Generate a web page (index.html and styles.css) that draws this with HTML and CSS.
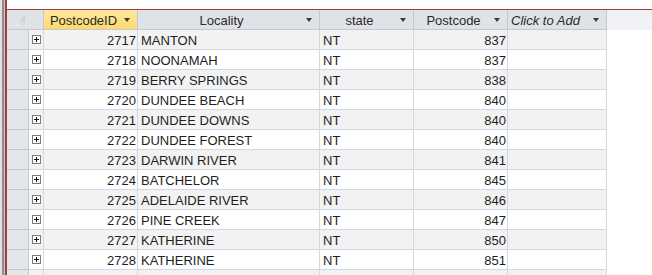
FILE: index.html
```html
<!DOCTYPE html>
<html lang="en">
  <head>
    <meta charset="UTF-8" />
    <title>Postcodes</title>
    <link rel="stylesheet" href="styles.css">
  </head>
  <body>
    <div id="window">
      <div class="frame"></div>
      <div class="sheet">
        <div class="topgap"></div>
        <div class="row head">
          <div class="corner">
            <svg width="11" height="11" viewBox="0 0 11 11">
              <defs>
                <linearGradient id="tri" x1="0" y1="1" x2="1" y2="0">
                  <stop offset="0" stop-color="#f2f3f5" />
                  <stop offset="1" stop-color="#c3c7ce" />
                </linearGradient>
              </defs>
              <polygon points="0,11 11,0 11,11" fill="url(#tri)" />
            </svg>
          </div>
          <div class="hcell sorted"><span class="label">PostcodeID</span><span class="drop"></span></div>
          <div class="hcell"><span class="label">Locality</span><span class="drop"></span></div>
          <div class="hcell"><span class="label">state</span><span class="drop"></span></div>
          <div class="hcell"><span class="label">Postcode</span><span class="drop"></span></div>
          <div class="hcell add"><span class="label">Click to Add</span><span class="drop"></span></div>
          <div class="hfill"></div>
        </div>
        <div id="rows"></div>
      </div>
    </div>

    <script>
      var records = [
        [2717, "MANTON", "NT", 837],
        [2718, "NOONAMAH", "NT", 837],
        [2719, "BERRY SPRINGS", "NT", 838],
        [2720, "DUNDEE BEACH", "NT", 840],
        [2721, "DUNDEE DOWNS", "NT", 840],
        [2722, "DUNDEE FOREST", "NT", 840],
        [2723, "DARWIN RIVER", "NT", 841],
        [2724, "BATCHELOR", "NT", 845],
        [2725, "ADELAIDE RIVER", "NT", 846],
        [2726, "PINE CREEK", "NT", 847],
        [2727, "KATHERINE", "NT", 850],
        [2728, "KATHERINE", "NT", 851],
        ["", "", "", ""]
      ];

      var plus =
        '<svg width="9" height="9" viewBox="0 0 9 9">' +
        '<rect x="0.5" y="0.5" width="8" height="8" fill="#fff" stroke="#7c7c7c" />' +
        '<path d="M2 4.5H7M4.5 2V7" stroke="#111" />' +
        "</svg>";

      var rows = document.getElementById("rows");
      for (let i = 0; i < records.length; i++) {
        const r = records[i];
        const row = document.createElement("div");
        row.className = i % 2 == 0 ? "row odd" : "row";
        row.innerHTML =
          '<div class="sel"></div>' +
          '<div class="cell exp">' + (r[0] === "" ? "" : plus) + "</div>" +
          '<div class="cell num">' + r[0] + "</div>" +
          '<div class="cell txt">' + r[1] + "</div>" +
          '<div class="cell txt">' + r[2] + "</div>" +
          '<div class="cell num">' + r[3] + "</div>" +
          '<div class="cell"></div>' +
          '<div class="fill"></div>';
        rows.appendChild(row);
      }
    </script>
  </body>
</html>
```

FILE: styles.css
```css
html {
  overflow: hidden;
}
body {
  margin: 0;
  width: 652px;
  height: 275px;
  overflow: hidden;
  background: #fff;
  font-family: "Liberation Sans", Arial, sans-serif;
  font-size: 13px;
  color: #1e1e1e;
}
#window {
  display: flex;
  height: 275px;
  overflow: hidden;
}
.frame {
  width: 7px;
  flex: none;
  background: linear-gradient(
    to right,
    #e2e2e2 0,
    #e2e2e2 2px,
    #8e8e8e 2px,
    #8e8e8e 4px,
    #c6c6c6 4px,
    #c6c6c6 5px,
    #a9393c 5px,
    #a9393c 7px
  );
}
.sheet {
  flex: 1;
  min-width: 0;
  overflow: hidden;
}
.topgap {
  height: 9px;
  border-bottom: 1px solid #a9393c;
}
.row {
  display: grid;
  grid-template-columns: 22px 15px 94px 182px 94px 94px 99px 1fr;
  height: 20px;
}
.row > div {
  box-sizing: border-box;
}

/* header */
.head {
  background: #dfe3e8;
}
.corner {
  grid-column: span 2;
  border-right: 1px solid #c4c9d1;
  border-bottom: 1px solid #c4c9d1;
  display: flex;
  align-items: flex-end;
  padding: 0 0 3px 7px;
}
.corner svg {
  display: block;
}
.hcell {
  display: flex;
  align-items: center;
  border-right: 1px solid #c4c9d1;
  border-bottom: 1px solid #c4c9d1;
  color: #2a2a2a;
  padding-top: 1px;
}
.hcell .label {
  flex: 1;
  text-align: center;
  padding-left: 4px;
  white-space: nowrap;
  overflow: hidden;
}
.hcell .drop {
  width: 18px;
  height: 4px;
  flex: none;
  position: relative;
}
.hcell .drop::after {
  content: "";
  position: absolute;
  left: 5px;
  top: 0;
  border-left: 3.5px solid transparent;
  border-right: 3.5px solid transparent;
  border-top: 4px solid #3a3a3a;
}
.sorted {
  background: linear-gradient(#fee9a0, #fdd96d);
}
.add .label {
  text-align: left;
  padding-left: 3px;
  font-style: italic;
}
.hfill {
  background: #f0f2f7;
}

/* records */
.sel {
  background: #e3e6eb;
  border-right: 1px solid #c4c9d1;
  border-bottom: 1px solid #c4c9d1;
}
.cell {
  border-right: 1px solid #d0d7e5;
  border-bottom: 1px solid #d0d7e5;
  line-height: 21px;
  white-space: nowrap;
  overflow: hidden;
}
.odd .cell {
  background: #f2f2f2;
}
.exp {
  display: flex;
  align-items: center;
  justify-content: center;
}
.exp svg {
  display: block;
}
.num {
  text-align: right;
  padding-right: 1px;
}
.txt {
  padding-left: 3px;
}
.fill {
  background: #fff;
}
```
